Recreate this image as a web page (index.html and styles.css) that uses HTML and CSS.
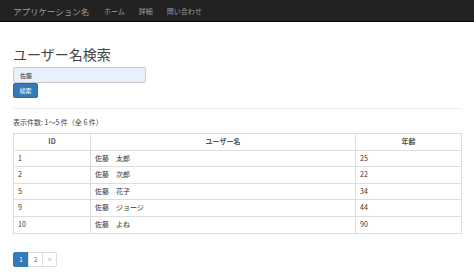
FILE: index.html
```html
<!DOCTYPE html>
<html lang="ja">
<head>
    <meta charset="UTF-8">
    <meta name="viewport" content="width=device-width, initial-scale=1.0">
    <title>ユーザー名検索</title>
    <link rel="stylesheet" href="styles.css">
</head>
<body>
    <nav class="navbar">
        <span class="brand">アプリケーション名</span>
        <ul class="nav">
            <li><a href="#">ホーム</a></li>
            <li><a href="#">詳細</a></li>
            <li><a href="#">問い合わせ</a></li>
        </ul>
    </nav>
    <div class="container">
        <h2>ユーザー名検索</h2>
        <form class="search">
            <input type="text" class="form-control" value="佐藤">
            <button type="submit" class="btn">検索</button>
        </form>
        <hr>
        <p class="count">表示件数: 1～5 件（全 6 件）</p>
        <table class="table">
            <thead>
                <tr><th class="col-id">ID</th><th class="col-name">ユーザー名</th><th>年齢</th></tr>
            </thead>
            <tbody>
                <tr><td>1</td><td>佐藤　太郎</td><td>25</td></tr>
                <tr><td>2</td><td>佐藤　次郎</td><td>22</td></tr>
                <tr><td>5</td><td>佐藤　花子</td><td>34</td></tr>
                <tr><td>9</td><td>佐藤　ジョージ</td><td>44</td></tr>
                <tr><td>10</td><td>佐藤　よね</td><td>90</td></tr>
            </tbody>
        </table>
        <ul class="pagination">
            <li class="active"><a href="#">1</a></li>
            <li><a href="#">2</a></li>
            <li><a href="#" class="next">&gt;</a></li>
        </ul>
    </div>
</body>
</html>
```

FILE: styles.css
```css
body {
    font-family: "Noto Sans CJK JP", "Liberation Sans", sans-serif;
    margin: 0;
    padding: 0;
    background-color: #fff;
    color: #333;
    font-size: 7px;
}

.navbar {
    display: flex;
    align-items: center;
    height: 22px;
    background-color: #222;
    border-bottom: 1px solid #080808;
    padding: 0 13px;
    box-sizing: border-box;
}
.brand {
    color: #9d9d9d;
    font-size: 8.5px;
    width: 75px;
    white-space: nowrap;
    margin-right: 16px;
}
.nav {
    display: flex;
    list-style: none;
    margin: 0;
    padding: 0;
    gap: 14px;
}
.nav a {
    color: #9d9d9d;
    text-decoration: none;
    font-size: 7px;
}

.container {
    padding: 0 12px 0 13px;
}

h2 {
    font-size: 14px;
    font-weight: 400;
    line-height: 16px;
    margin: 24px 0 5px;
    color: #444;
}

.search {
    display: flex;
    flex-direction: column;
    align-items: flex-start;
}
.form-control {
    width: 133px;
    height: 16px;
    box-sizing: border-box;
    border: 1px solid #ccc;
    border-radius: 2px;
    background-color: #e8f0fe;
    padding: 0 6px;
    font-family: inherit;
    font-size: 6px;
    color: #333;
    margin: 0;
}
.btn {
    width: 25px;
    height: 15px;
    padding: 0;
    border: 1px solid #2e6da4;
    border-radius: 2px;
    background-color: #337ab7;
    color: #fff;
    font-family: inherit;
    font-size: 6px;
    cursor: pointer;
}

hr {
    border: 0;
    border-top: 1px solid #eee;
    margin: 10px 0 9px;
}

.count {
    margin: 0 0 6px;
    line-height: 9px;
    color: #444;
}

.table {
    width: 100%;
    border-collapse: collapse;
    border: 1px solid #ddd;
    color: #333;
}
.table th,
.table td {
    border: 1px solid #ddd;
    padding: 4px 4px;
    line-height: 7.6px;
    text-align: left;
}
.table th {
    text-align: center;
    font-weight: 700;
    color: #555;
}
.col-id {
    width: 68px;
}
.col-name {
    width: 256px;
}

.pagination {
    display: flex;
    list-style: none;
    padding: 0;
    margin: 18px 0 0;
}
.pagination a {
    display: block;
    width: 15px;
    height: 15px;
    line-height: 13px;
    box-sizing: border-box;
    text-align: center;
    border: 1px solid #ddd;
    margin-left: -1px;
    color: #337ab7;
    text-decoration: none;
    font-size: 6.5px;
}
.pagination li:first-child a {
    margin-left: 0;
    width: 16px;
    border-radius: 2px 0 0 2px;
}
.pagination li:last-child a {
    border-radius: 0 2px 2px 0;
}
.pagination .active a {
    background-color: #337ab7;
    border-color: #337ab7;
    color: #fff;
}
.pagination .next {
    color: #999;
}
```
